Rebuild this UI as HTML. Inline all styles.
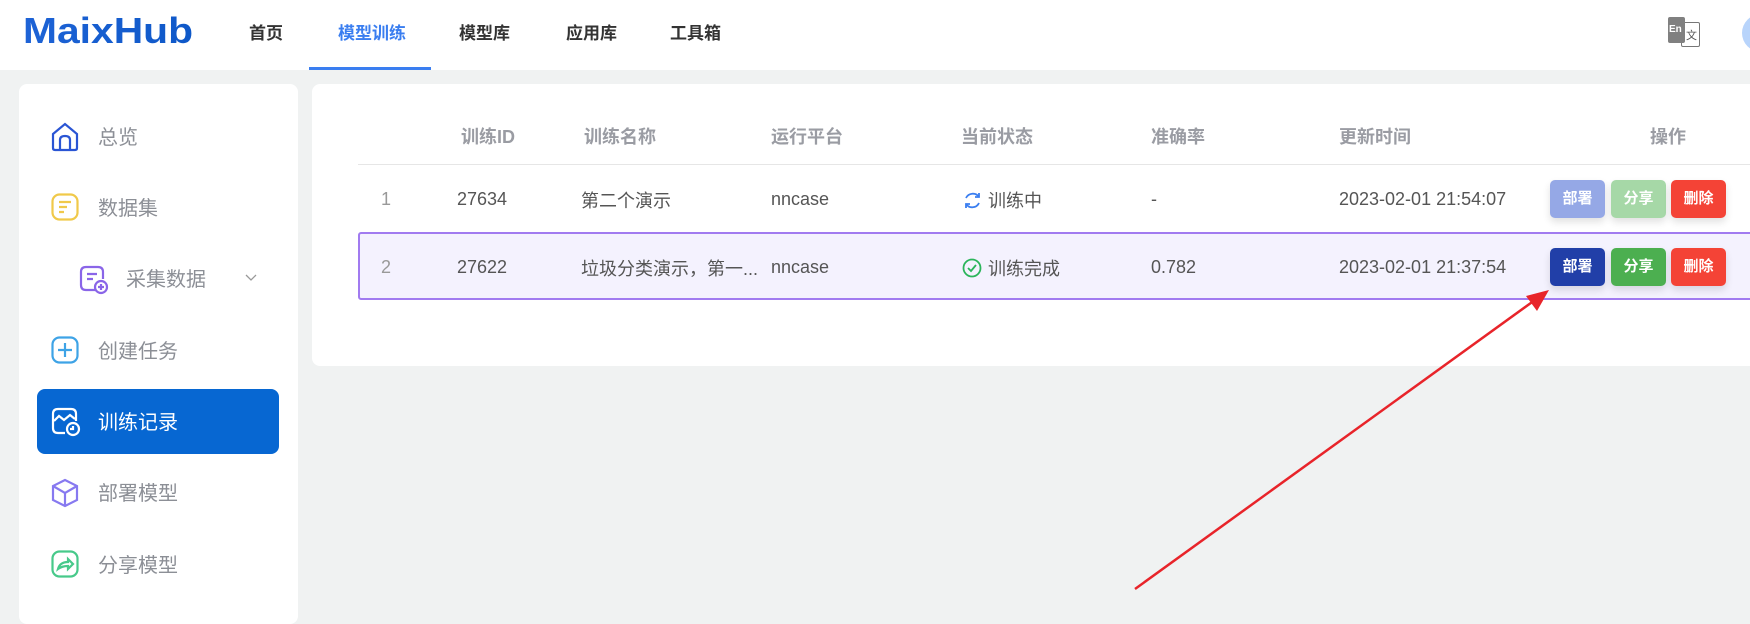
<!DOCTYPE html>
<html><head><meta charset="utf-8"><style>
*{margin:0;padding:0;box-sizing:border-box}
body{width:1750px;height:611px;overflow:hidden;background:#f0f2f2;font-family:"Liberation Sans","Noto Sans CJK SC",sans-serif;position:relative}
.abs{position:absolute}
.hdr{left:0;top:0;width:1750px;height:70px;background:#fff}
.nav{top:19px;font-size:17px;font-weight:bold;color:#333;white-space:nowrap}
.side{left:19px;top:84px;width:279px;height:540px;background:#fff;border-radius:8px}
.main{left:312px;top:84px;width:1450px;height:282px;background:#fff;border-radius:8px}
.si{font-size:20px;color:#8c8f96;white-space:nowrap}
.ic{position:absolute}
.th{top:123px;font-size:18px;font-weight:bold;color:#9a9ca3;white-space:nowrap}
.td{font-size:18px;color:#555;white-space:nowrap}
.btn{width:55px;height:38px;border-radius:5px;color:#fff;font-size:15px;font-weight:bold;text-align:center;line-height:38px;box-shadow:0 4px 8px rgba(0,0,0,.12)}
</style></head><body>
<div class="abs hdr"></div>
<svg class="abs" style="left:20px;top:8px" width="180" height="44"><defs><linearGradient id="g" x1="0" x2="1"><stop offset="0" stop-color="#1e63d6"/><stop offset="1" stop-color="#0e58c8"/></linearGradient></defs><text x="3" y="35" font-family="Liberation Sans,sans-serif" font-weight="bold" font-size="36" fill="url(#g)" textLength="170" lengthAdjust="spacingAndGlyphs">MaixHub</text></svg>
<div class="abs nav" style="left:249px">首页</div>
<div class="abs nav" style="left:338px;color:#3a7ef0">模型训练</div>
<div class="abs" style="left:309px;top:67px;width:122px;height:3px;background:#3a7ef0"></div>
<div class="abs nav" style="left:459px">模型库</div>
<div class="abs nav" style="left:566px">应用库</div>
<div class="abs nav" style="left:670px">工具箱</div>
<div class="abs" style="left:1681px;top:22px;width:19px;height:25px;border:1.5px solid #777;border-radius:2px;background:#fff;font-size:11px;color:#555;padding:4px 0 0 4px">文</div>
<div class="abs" style="left:1668px;top:17px;width:17px;height:26px;background:#808080;border-radius:2px;font-size:10px;color:#fff;font-weight:bold;padding:7px 0 0 1px">En</div>
<div class="abs" style="left:1742px;top:14px;width:38px;height:38px;border-radius:50%;background:#b8d4fb"></div>

<div class="abs side"></div>
<svg class="ic" style="left:51px;top:122px" width="28" height="30" viewBox="0 0 28 30" fill="none" stroke="#2a55d4" stroke-width="2.2"><path d="M2 12 L14 2 L26 12 V26 Q26 28 24 28 H4 Q2 28 2 26 Z"/><path d="M9 28 V18 Q9 14 14 14 Q19 14 19 18 V28"/></svg>
<div class="abs si" style="left:98px;top:121px">总览</div>
<svg class="ic" style="left:51px;top:193px" width="28" height="28" fill="none" stroke="#f0c94a" stroke-width="2.2"><rect x="1.5" y="1.5" width="25" height="25" rx="7"/><path d="M8 9 H20 M8 14 H16 M8 19 H13"/></svg>
<div class="abs si" style="left:98px;top:192px">数据集</div>
<svg class="ic" style="left:79px;top:265px" width="30" height="30" fill="none" stroke="#8a65e8" stroke-width="2.2"><path d="M17 25 H7 Q2 25 2 20 V7 Q2 2 7 2 H19 Q24 2 24 7 V14"/><path d="M8 9 H18 M8 14 H14"/><circle cx="22" cy="22" r="6"/><path d="M22 19 V25 M19 22 H25"/></svg>
<div class="abs si" style="left:126px;top:263px">采集数据</div>
<svg class="ic" style="left:245px;top:274px" width="12" height="8" fill="none" stroke="#999" stroke-width="1.3"><path d="M1 1 L6 6 L11 1"/></svg>
<svg class="ic" style="left:51px;top:336px" width="28" height="28" fill="none" stroke="#3ea3e6" stroke-width="2.2"><rect x="1.5" y="1.5" width="25" height="25" rx="7"/><path d="M14 7 V21 M7 14 H21"/></svg>
<div class="abs si" style="left:98px;top:335px">创建任务</div>
<div class="abs" style="left:37px;top:389px;width:242px;height:65px;background:#0767d2;border-radius:8px"></div>
<svg class="ic" style="left:51px;top:407px" width="30" height="30" fill="none" stroke="#fff" stroke-width="2.2"><path d="M14 26 H7 Q2 26 2 21 V7 Q2 2 7 2 H20 Q25 2 25 7 V14"/><path d="M3 14 L8 9 L13 13 L19 8 L24 12"/><circle cx="22" cy="22" r="6"/><path d="M22 19 V22 H19"/></svg>
<div class="abs si" style="left:98px;top:406px;color:#fff">训练记录</div>
<svg class="ic" style="left:51px;top:478px" width="28" height="30" fill="none" stroke="#8779f0" stroke-width="2.2"><path d="M14 2 L26 8 V22 L14 28 L2 22 V8 Z"/><path d="M2 8 L14 15 L26 8 M14 15 V28"/></svg>
<div class="abs si" style="left:98px;top:477px">部署模型</div>
<svg class="ic" style="left:51px;top:550px" width="28" height="28" fill="none" stroke="#47c98a" stroke-width="2.2"><rect x="1.5" y="1.5" width="25" height="25" rx="7"/><path d="M7 19 Q9 12 17 12 V9 L22 14 L17 19 V16 Q11 16 7 19 Z"/></svg>
<div class="abs si" style="left:98px;top:549px">分享模型</div>

<div class="abs main"></div>
<div class="abs th" style="left:461px">训练ID</div>
<div class="abs th" style="left:584px">训练名称</div>
<div class="abs th" style="left:771px">运行平台</div>
<div class="abs th" style="left:961px">当前状态</div>
<div class="abs th" style="left:1151px">准确率</div>
<div class="abs th" style="left:1339px">更新时间</div>
<div class="abs th" style="left:1650px">操作</div>
<div class="abs" style="left:358px;top:164px;width:1392px;height:1px;background:#e6e6e6"></div>

<div class="abs td" style="left:381px;top:189px;color:#999">1</div>
<div class="abs td" style="left:457px;top:189px">27634</div>
<div class="abs td" style="left:581px;top:187px">第二个演示</div>
<div class="abs td" style="left:771px;top:189px">nncase</div>
<svg class="ic" style="left:963px;top:191px" width="19" height="19" fill="none" stroke="#3a7ef0" stroke-width="1.8"><path d="M3 7 A7.5 7.5 0 0 1 16 6 M16 12 A7.5 7.5 0 0 1 3 13"/><path d="M16 2 V6 H12 M3 17 V13 H7"/></svg>
<div class="abs td" style="left:988px;top:187px">训练中</div>
<div class="abs td" style="left:1151px;top:189px">-</div>
<div class="abs td" style="left:1339px;top:189px">2023-02-01 21:54:07</div>
<div class="abs btn" style="left:1550px;top:180px;background:#95a8e6">部署</div>
<div class="abs btn" style="left:1611px;top:180px;background:#a6d8a7">分享</div>
<div class="abs btn" style="left:1671px;top:180px;background:#f44336">删除</div>

<div class="abs" style="left:358px;top:232px;width:1410px;height:68px;background:#f4f2fe;border:2px solid #a17bf0;border-radius:3px"></div>
<div class="abs td" style="left:381px;top:257px;color:#999">2</div>
<div class="abs td" style="left:457px;top:257px">27622</div>
<div class="abs td" style="left:581px;top:255px">垃圾分类演示，第一...</div>
<div class="abs td" style="left:771px;top:257px">nncase</div>
<svg class="ic" style="left:962px;top:258px" width="20" height="20" fill="none" stroke="#2bb55b" stroke-width="1.8"><circle cx="10" cy="10" r="8.5"/><path d="M6 10 L9 13 L14 7"/></svg>
<div class="abs td" style="left:988px;top:255px">训练完成</div>
<div class="abs td" style="left:1151px;top:257px">0.782</div>
<div class="abs td" style="left:1339px;top:257px">2023-02-01 21:37:54</div>
<div class="abs btn" style="left:1550px;top:248px;background:#213fa8">部署</div>
<div class="abs btn" style="left:1611px;top:248px;background:#4caf50">分享</div>
<div class="abs btn" style="left:1671px;top:248px;background:#f44336">删除</div>

<svg class="abs" style="left:0;top:0" width="1750" height="611"><line x1="1135" y1="589" x2="1535" y2="300" stroke="#e8242a" stroke-width="2.5"/><path d="M1549 290 L1526 296 L1537 311 Z" fill="#e8242a"/></svg>
</body></html>
